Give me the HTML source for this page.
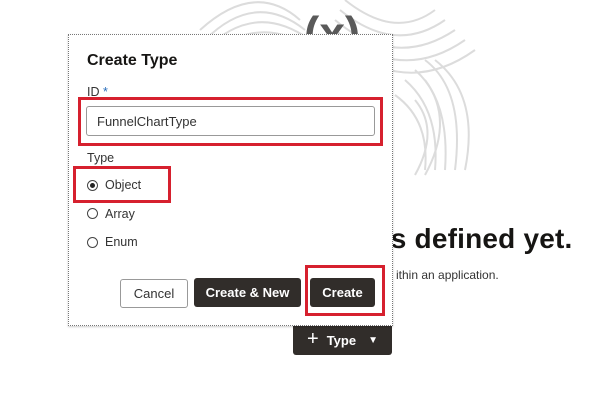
<!DOCTYPE html>
<html><head><style>
*{margin:0;padding:0;box-sizing:border-box}
body{width:600px;height:407px;background:#fff;position:relative;overflow:hidden;font-family:"Liberation Sans","DejaVu Sans",sans-serif;color:#161513}
.a{position:absolute}
.red{position:absolute;border:3px solid #d6202e}
.btn{position:absolute;height:29px;border-radius:3px;font-size:13px;font-weight:bold;display:flex;align-items:center;justify-content:center}
.dark{background:#312d2a;color:#fff}
.rad{position:absolute;width:11px;height:11px;border:1px solid #444;border-radius:50%}
.lbl{position:absolute;font-size:12.5px;color:#333}
</style></head><body>
<svg class="a" style="left:195px;top:0" width="290" height="180" viewBox="0 0 290 180">
<g fill="none" stroke="#dcdcdc" stroke-width="2">
<path d="M10 40 Q60 -10 110 30 M10 50 Q60 0 115 40 M12 60 Q60 10 120 50 M15 70 Q60 20 125 60 M20 80 Q60 30 128 70 M5 30 Q60 -20 105 20"/>
<path d="M150 0 Q200 40 240 10 M145 10 Q200 55 250 20 M140 20 Q200 70 260 30 M140 30 Q205 85 270 40 M140 40 Q210 100 280 50"/>
<path d="M230 60 Q270 90 260 170 M240 60 Q285 95 270 170 M220 70 Q255 100 250 170 M210 80 Q245 110 240 170 M200 95 Q235 120 230 170"/>
<path d="M230 80 Q260 120 230 175 M220 100 Q245 130 220 175"/>
</g>
</svg>
<div class="a" style="left:304px;top:6px;font-size:46px;font-weight:bold;color:#5a5a5a">(x)</div>
<div class="a" style="left:375px;top:223px;font-size:28px;font-weight:bold;letter-spacing:0.2px">es defined yet.</div>
<div class="a" style="left:396px;top:268px;font-size:12px;color:#333">ithin an application.</div>
<div class="btn dark" style="left:293px;top:325px;width:99px;height:30px;border-radius:0 0 3px 3px">
<span style="font-size:20px;font-weight:normal;margin-right:8px;position:relative;top:-1px">+</span>Type<span style="font-size:10px;margin-left:12px">▼</span></div>
<div class="a" style="left:68px;top:34px;width:325px;height:292px;background:#fff;border:1px dotted #777;box-shadow:0 1px 2px rgba(0,0,0,.2)"></div>
<div class="a" style="left:87px;top:52px;font-size:16px;font-weight:bold">Create Type</div>
<div class="lbl" style="left:87px;top:85px">ID <span style="color:#2a6ebb">*</span></div>
<div class="red" style="left:78px;top:97px;width:305px;height:49px"></div>
<div class="a" style="left:86px;top:106px;width:289px;height:30px;border:1px solid #999;border-radius:3px;font-size:13px;color:#333;padding:7px 10px">FunnelChartType</div>
<div class="lbl" style="left:87px;top:151px">Type</div>
<div class="red" style="left:73px;top:166px;width:98px;height:37px"></div>
<div class="rad" style="left:87px;top:180px"><div style="position:absolute;left:2px;top:2px;width:5px;height:5px;border-radius:50%;background:#222"></div></div>
<div class="lbl" style="left:105px;top:178px">Object</div>
<div class="rad" style="left:87px;top:208px"></div>
<div class="lbl" style="left:105px;top:207px">Array</div>
<div class="rad" style="left:87px;top:237px"></div>
<div class="lbl" style="left:105px;top:235px">Enum</div>
<div class="btn" style="left:120px;top:279px;width:68px;border:1px solid #999;font-weight:normal;color:#333">Cancel</div>
<div class="btn dark" style="left:194px;top:278px;width:107px">Create &amp; New</div>
<div class="red" style="left:305px;top:265px;width:80px;height:51px"></div>
<div class="btn dark" style="left:310px;top:278px;width:65px">Create</div>
</body></html>
